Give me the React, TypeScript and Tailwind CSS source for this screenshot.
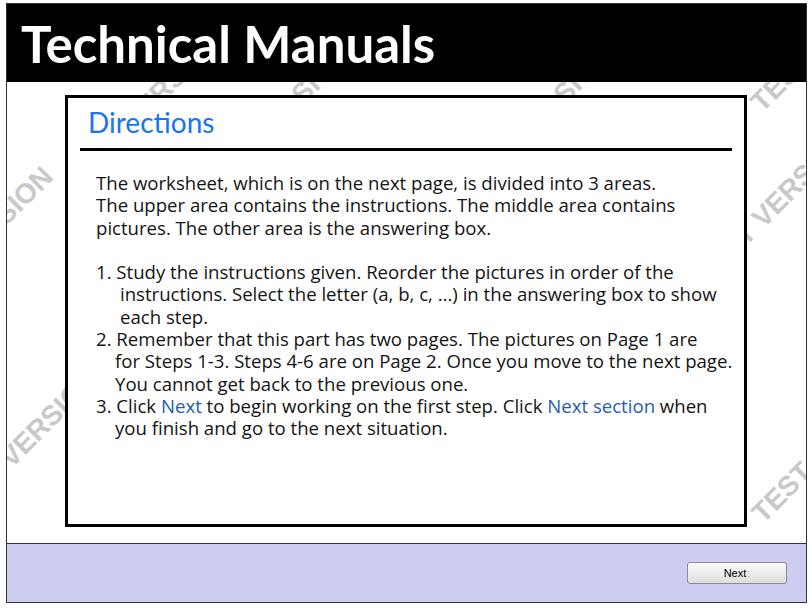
const marks = [
  "left-[756px] top-[8px]",
  "left-[701px] top-[180px]",
  "left-[757px] top-[419px]",
  "left-[-97px] top-[218px]",
  "left-[-51px] top-[420px]",
  "left-[72px] top-[82px]",
  "left-[200px] top-[97px]",
  "left-[462px] top-[97px]",
];

function Link({ children }: { children: React.ReactNode }) {
  return <span className="text-[#1f5cb8]">{children}</span>;
}

export default function App() {
  return (
    <div className="w-[812px] h-[611px] bg-white pt-[3px] pl-[6px]">
      <div className="w-[801px] h-[600px] border border-[#333] flex flex-col">
        <header className="h-[78px] bg-black pt-[10px] pl-[14px]">
          <h1 className="text-white font-bold text-[51px] leading-[60px] font-['Lato',sans-serif]">
            Technical Manuals
          </h1>
        </header>

        <main className="relative flex-1 overflow-hidden pt-[13px] pl-[58px]">
          {marks.map((m, i) => (
            <span
              key={i}
              className={`absolute ${m} origin-[0_24px] -rotate-45 whitespace-nowrap text-[28px] leading-none font-bold text-[#c9c9c9] font-['Liberation_Sans',sans-serif]`}
            >
              TEST VERSION
            </span>
          ))}

          <section className="relative z-10 w-[682px] h-[432px] bg-white border-[3px] border-black text-[#141414]">
            <h2 className="pt-[7px] pl-[20px] text-[28px] leading-[34px] text-[#1a73f0] font-['Lato',sans-serif]">
              Directions
            </h2>
            <div className="mt-[9px] mx-[12px] h-[3px] bg-black" />

            <div className="mt-[21px] pl-[28px] text-[18.6px] leading-[22.3px] whitespace-nowrap font-['Open_Sans',sans-serif]">
              <div>The worksheet, which is on the next page, is divided into 3 areas.</div>
              <div>The upper area contains the instructions. The middle area contains</div>
              <div>pictures. The other area is the answering box.</div>
              <div className="h-[22.3px]" />
              <div>1. Study the instructions given. Reorder the pictures in order of the</div>
              <div className="pl-[24px]">instructions. Select the letter (a, b, c, ...) in the answering box to show</div>
              <div className="pl-[24px]">each step.</div>
              <div>2. Remember that this part has two pages. The pictures on Page 1 are</div>
              <div className="pl-[19px]">for Steps 1-3. Steps 4-6 are on Page 2. Once you move to the next page.</div>
              <div className="pl-[19px]">You cannot get back to the previous one.</div>
              <div>
                3. Click <Link>Next</Link> to begin working on the first step. Click <Link>Next section</Link> when
              </div>
              <div className="pl-[19px]">you finish and go to the next situation.</div>
            </div>
          </section>
        </main>

        <footer className="h-[59px] border-t border-[#333] bg-[#cdcdf1] flex items-center justify-end pr-[19px]">
          <button className="w-[100px] h-[22px] rounded-[3px] border border-[#8c8c8c] bg-gradient-to-b from-[#fbfbfb] to-[#dedede] text-[11px] text-black font-['Liberation_Sans',sans-serif] flex items-center justify-center">
            Next<span className="text-[#f0a030] ml-[1px]">:</span>
          </button>
        </footer>
      </div>
    </div>
  );
}
